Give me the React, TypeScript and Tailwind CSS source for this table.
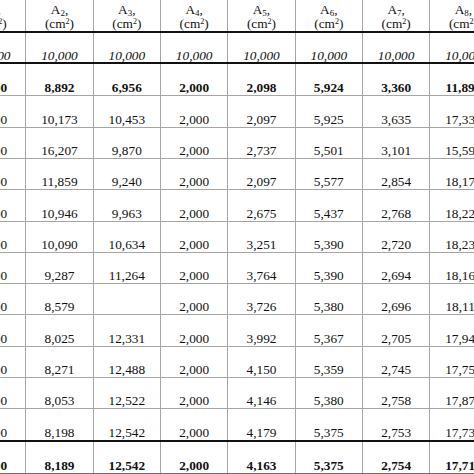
const cols = ['1', '2', '3', '4', '5', '6', '7', '8']

const initial = cols.map(() => '10,000')

const first = ['2,000', '8,892', '6,956', '2,000', '2,098', '5,924', '3,360', '11,892']

const rows = [
  ['2,000', '10,173', '10,453', '2,000', '2,097', '5,925', '3,635', '17,335'],
  ['2,000', '16,207', '9,870', '2,000', '2,737', '5,501', '3,101', '15,593'],
  ['2,000', '11,859', '9,240', '2,000', '2,097', '5,577', '2,854', '18,175'],
  ['2,000', '10,946', '9,963', '2,000', '2,675', '5,437', '2,768', '18,225'],
  ['2,000', '10,090', '10,634', '2,000', '3,251', '5,390', '2,720', '18,235'],
  ['2,000', '9,287', '11,264', '2,000', '3,764', '5,390', '2,694', '18,165'],
  ['2,000', '8,579', '', '2,000', '3,726', '5,380', '2,696', '18,115'],
  ['2,000', '8,025', '12,331', '2,000', '3,992', '5,367', '2,705', '17,945'],
  ['2,000', '8,271', '12,488', '2,000', '4,150', '5,359', '2,745', '17,755'],
  ['2,000', '8,053', '12,522', '2,000', '4,146', '5,380', '2,758', '17,875'],
  ['2,000', '8,198', '12,542', '2,000', '4,179', '5,375', '2,753', '17,735'],
]

const last = ['2,000', '8,189', '12,542', '2,000', '4,163', '5,375', '2,754', '17,715']

// row heights incl. bottom border, to land on the ruled lines of the scan
const heights = ['h-[32px]', 'h-[31px]', 'h-[31px]', 'h-[32px]', 'h-[31px]', 'h-[31px]', 'h-[31px]', 'h-[32px]', 'h-[31px]', 'h-[31px]', 'h-[33px]']

const grid = 'grid grid-cols-[repeat(8,67.33px)]'
const line = 'border-r border-[#a6a6a6]'

function Row({ values, className, text }: { values: string[]; className: string; text: string }) {
  return (
    <div className={`${grid} ${className}`}>
      {values.map((v, i) => (
        <div key={i} className={`flex items-end justify-center ${line} ${text}`}>{v}</div>
      ))}
    </div>
  )
}

export default function App() {
  return (
    <div className="w-[474px] h-[474px] overflow-hidden bg-white text-[#111] text-[13.3px] font-['Liberation_Serif',_'Times_New_Roman',_serif]">
      <div className="ml-[-41px] w-[538.67px]">
        {/* header */}
        <div className={`${grid} h-[33px] border-b-2 border-[#111]`}>
          {cols.map(c => (
            <div key={c} className={`flex flex-col items-center justify-end ${line} leading-[14px] pt-[3px]`}>
              <span className="h-[14px]">A<sub className="text-[9px] leading-none">{c}</sub>,</span>
              <span className="h-[14px]">(cm<sup className="text-[8px] leading-none">2</sup>)</span>
            </div>
          ))}
        </div>

        <Row values={initial} className="h-[31px] border-b-2 border-[#111]" text="italic leading-[13px]" />
        <Row values={first} className="h-[32px] border-b border-[#a6a6a6]" text="font-bold leading-[15px]" />

        {rows.map((r, i) => (
          <Row
            key={i}
            values={r}
            className={`${heights[i]} ${i === rows.length - 1 ? 'border-b-2 border-[#111]' : 'border-b border-[#a6a6a6]'}`}
            text="leading-[15px]"
          />
        ))}

        <Row values={last} className="h-[33px] border-b-2 border-[#6b6b6b]" text="font-bold leading-[15px]" />
      </div>
    </div>
  )
}
